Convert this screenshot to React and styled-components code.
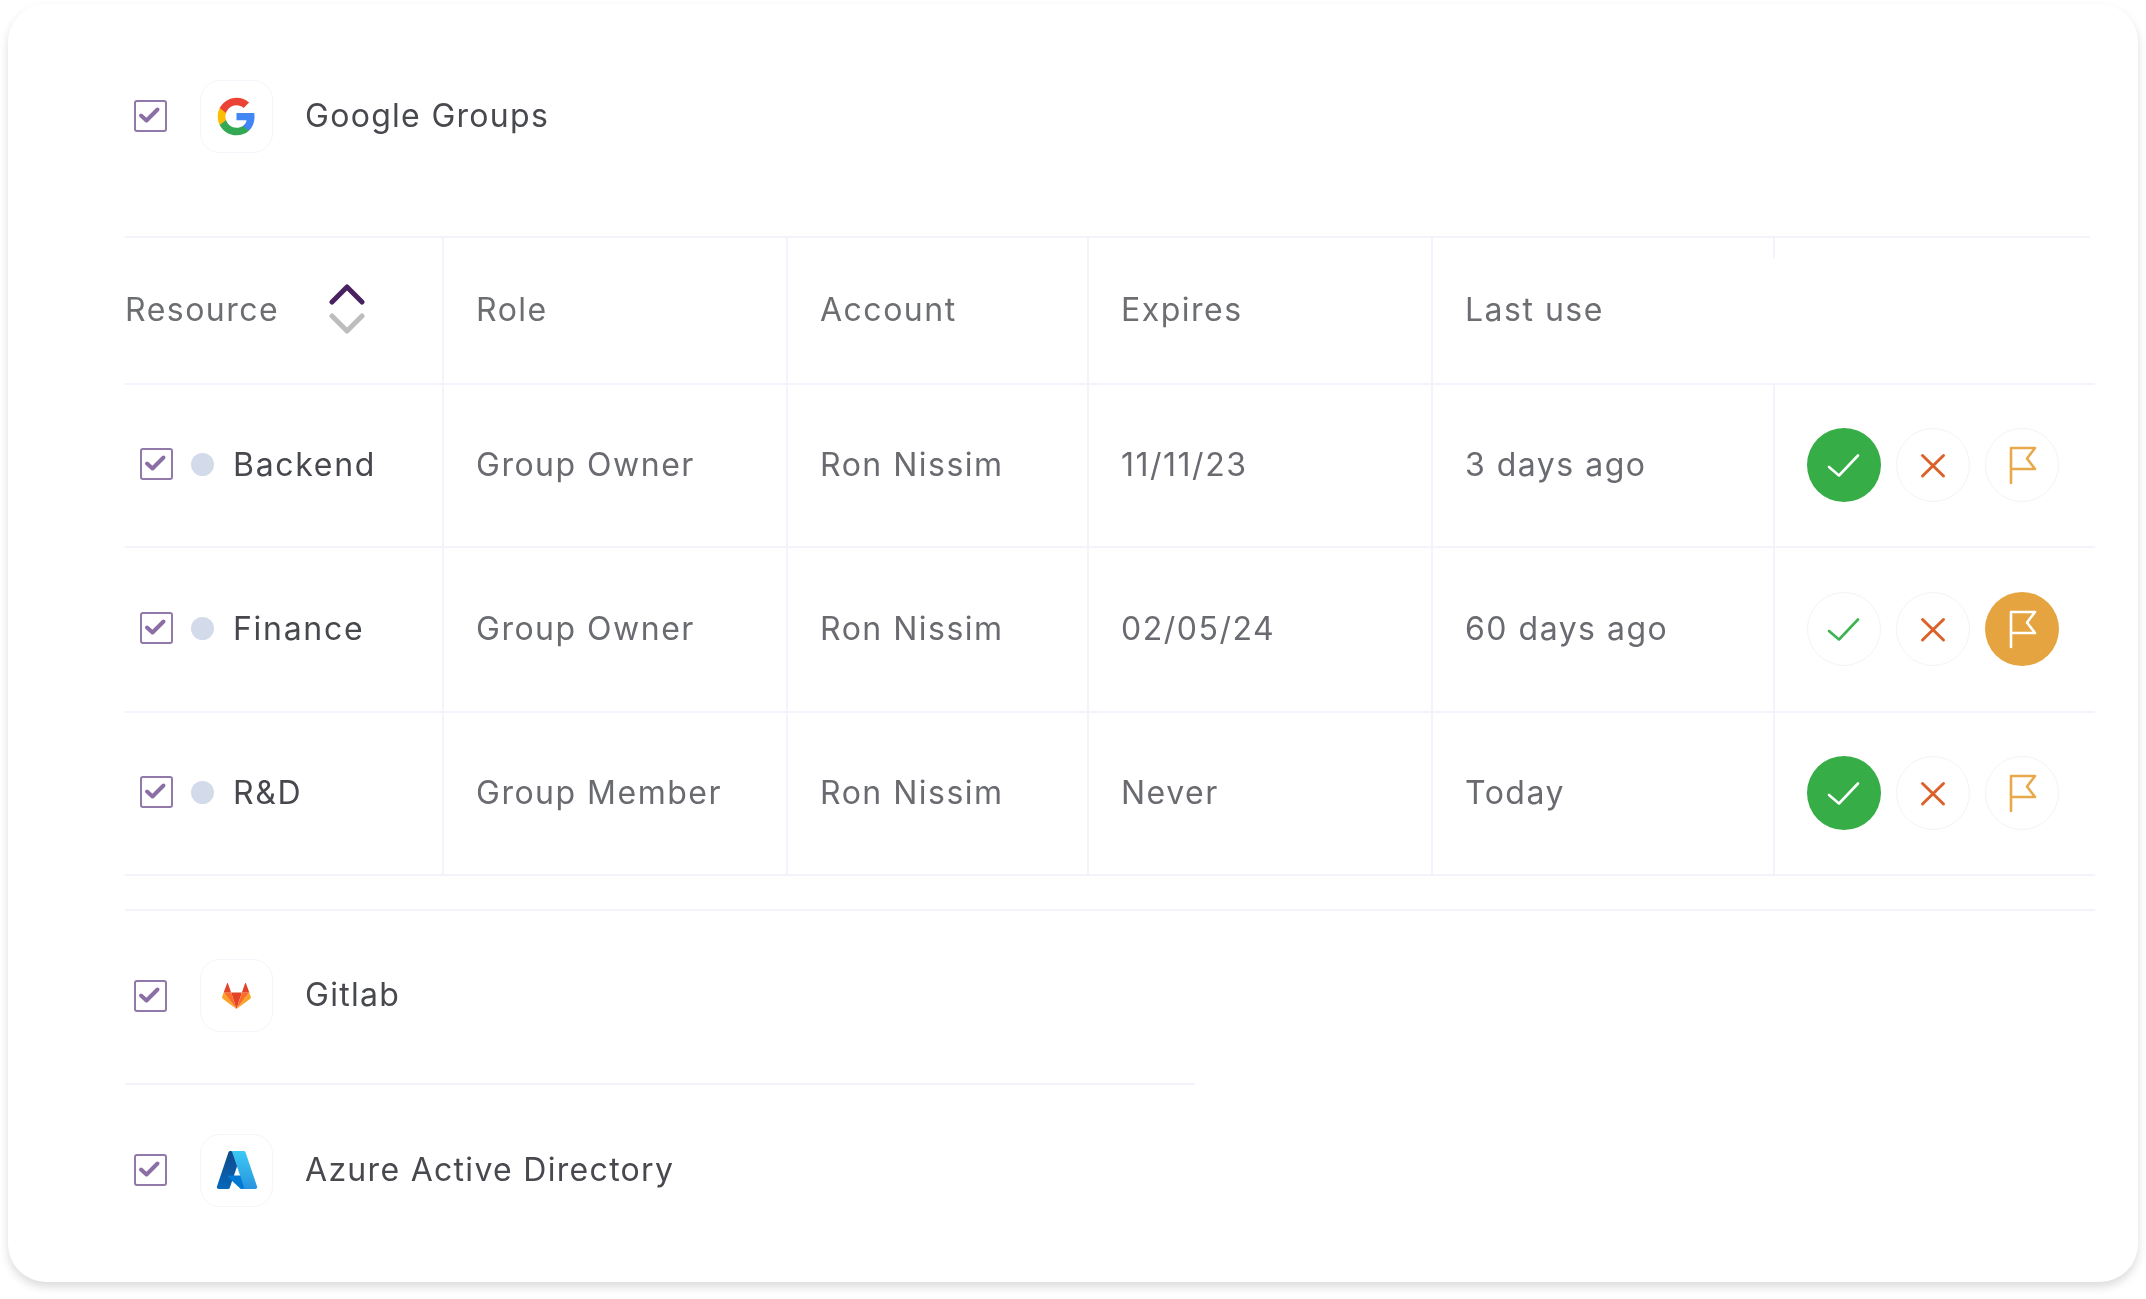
import React from 'react';
import styled, { createGlobalStyle } from 'styled-components';

const GlobalStyle = createGlobalStyle`
  html, body {
    margin: 0;
    padding: 0;
    background: #fff;
  }
  body {
    box-sizing: border-box;
    min-height: 1299px;
    padding-top: 4px;
    font-family: Inter, "Noto Sans", sans-serif;
  }
`;

const Card = styled.div`
  box-sizing: border-box;
  width: 2130px;
  height: 1278px;
  margin-left: 8px;
  padding: 0 43px 0 117px;
  background: #fff;
  border-radius: 38px;
  box-shadow: 0 5px 10px rgba(0, 0, 0, 0.14);
  filter: blur(0.4px);
`;

const GroupRow = styled.div`
  box-sizing: border-box;
  display: flex;
  align-items: center;
  height: ${(p) => p.$height}px;
  padding: 0 0 ${(p) => p.$bottom || 0}px 9px;
  width: ${(p) => p.$width || '100%'};
  border-bottom: ${(p) => (p.$line ? '2px solid #f3f4f9' : 'none')};
`;

const Check = styled.span`
  box-sizing: border-box;
  flex: none;
  width: 33px;
  height: 32px;
  border: 2px solid #9179a9;
  border-radius: 3px;
  svg {
    display: block;
    width: 29px;
    height: 28px;
  }
`;

const LogoBox = styled.div`
  box-sizing: border-box;
  flex: none;
  display: flex;
  align-items: center;
  justify-content: center;
  width: 73px;
  height: 73px;
  margin-left: 33px;
  border: 1.5px solid #f4f5fb;
  border-radius: 20px;
`;

const GroupName = styled.span`
  margin-left: 32px;
  padding-bottom: 2px;
  font-size: 32px;
  letter-spacing: 1.3px;
  color: #47494e;
`;

const Spacer = styled.div`
  box-sizing: border-box;
  height: 35px;
  border-bottom: 2px solid #f3f4f9;
`;

const Table = styled.div`
  border-top: 2px solid #f3f4fb;
  margin-right: 5px;
`;

const Row = styled.div`
  display: grid;
  grid-template-columns: 319px 344px 301px 344px 342px 1fr;
  height: ${(p) => p.$height}px;
  box-sizing: border-box;
  border-bottom: 2px solid #f3f4fb;
  margin-right: -5px;
`;

const Cell = styled.div`
  position: relative;
  box-sizing: border-box;
  display: flex;
  align-items: center;
  padding: 0 0 3px 32px;
  border-right: ${(p) => (p.$noLine ? 'none' : '2px solid #f3f4fb')};
  font-size: 32px;
  letter-spacing: 1.5px;
  white-space: nowrap;
  color: ${(p) => (p.$head ? '#6c6e72' : '#696b70')};
`;

const ResourceHead = styled(Cell)`
  padding-left: 0;
`;

const LastUseHead = styled(Cell)`
  border-right: none;
  &::after {
    content: '';
    position: absolute;
    top: 0;
    right: 0;
    width: 2px;
    height: 20px;
    background: #f3f4fb;
  }
`;

const SortIcon = styled.svg`
  flex: none;
  width: 36px;
  height: 50px;
  margin-left: 50px;
`;

const ResourceCell = styled(Cell)`
  padding-left: 15px;
  letter-spacing: 1.7px;
`;

const Dot = styled.span`
  flex: none;
  width: 23px;
  height: 23px;
  margin-left: 18px;
  border-radius: 50%;
  background: #d3dbea;
`;

const ResourceName = styled.span`
  margin-left: 19px;
  color: #46484d;
`;

const Actions = styled(Cell)`
  gap: 15px;
  padding: 0 0 1px 32px;
  border-right: none;
`;

const ActionButton = styled.span`
  box-sizing: border-box;
  flex: none;
  display: flex;
  align-items: center;
  justify-content: center;
  width: 74px;
  height: 74px;
  border-radius: 50%;
  border: ${(p) => (p.$fill ? 'none' : '1.5px solid #f3f4f8')};
  background: ${(p) => p.$fill || '#fff'};
  svg {
    width: 74px;
    height: 74px;
    flex: none;
  }
`;

const TickMark = () => (
  <svg viewBox="0 0 29 28" fill="none" stroke="#8c6ea6" strokeWidth="4" strokeLinecap="round" strokeLinejoin="round">
    <path d="M5 13.5l5.5 5L21.5 7.5" />
  </svg>
);

const GoogleLogo = () => (
  <svg width="41" height="41" viewBox="0 0 24 24">
    <path fill="#4285F4" d="M22.56 12.25c0-.78-.07-1.53-.2-2.25H12v4.26h5.92c-.26 1.37-1.04 2.53-2.21 3.31v2.77h3.57c2.08-1.92 3.28-4.74 3.28-8.09z" />
    <path fill="#34A853" d="M12 23c2.97 0 5.46-.98 7.28-2.66l-3.57-2.77c-.98.66-2.23 1.06-3.71 1.06-2.86 0-5.29-1.93-6.16-4.53H2.18v2.84C3.99 20.53 7.7 23 12 23z" />
    <path fill="#FBBC05" d="M5.84 14.09c-.22-.66-.35-1.36-.35-2.09s.13-1.43.35-2.09V7.07H2.18C1.43 8.55 1 10.22 1 12s.43 3.45 1.18 4.93l2.85-2.22.81-.62z" />
    <path fill="#EA4335" d="M12 5.38c1.62 0 3.06.56 4.21 1.64l3.15-3.15C17.45 2.09 14.97 1 12 1 7.7 1 3.99 3.47 2.18 7.07l3.66 2.84c.87-2.6 3.3-4.53 6.16-4.53z" />
  </svg>
);

const GitlabLogo = () => (
  <svg width="29" height="26" viewBox="0 0 28 25">
    <polygon fill="#e24329" points="14,25 8.8,9 19.2,9" />
    <polygon fill="#fc6d26" points="14,25 8.8,9 1.6,9" />
    <polygon fill="#fc6d26" points="14,25 19.2,9 26.4,9" />
    <polygon fill="#fca326" points="1.6,9 0,14 1,15.5 14,25" />
    <polygon fill="#fca326" points="26.4,9 28,14 27,15.5 14,25" />
    <polygon fill="#e24329" points="1.6,9 8.8,9 5.6,0 5,0" />
    <polygon fill="#e24329" points="26.4,9 19.2,9 22.4,0 23,0" />
  </svg>
);

const AzureLogo = () => (
  <svg width="44" height="44" viewBox="0 0 96 96">
    <defs>
      <linearGradient id="az-b" x1="0.3" y1="0" x2="0.1" y2="1">
        <stop offset="0" stopColor="#114a8b" />
        <stop offset="1" stopColor="#0669bc" />
      </linearGradient>
      <linearGradient id="az-c" x1="0.6" y1="0" x2="0.5" y2="1">
        <stop offset="0" stopColor="#3ccbf4" />
        <stop offset="1" stopColor="#2892df" />
      </linearGradient>
    </defs>
    <path fill="url(#az-b)" d="M33.338 6.544h26.038l-27.03 80.087a4.152 4.152 0 0 1-3.933 2.824H8.149a4.145 4.145 0 0 1-3.928-5.47L29.404 9.368a4.152 4.152 0 0 1 3.934-2.825z" />
    <path fill="#0078d4" d="M71.175 60.261h-41.29a1.911 1.911 0 0 0-1.305 3.309l26.532 24.764a4.171 4.171 0 0 0 2.846 1.121h23.38z" />
    <path fill="url(#az-c)" d="M66.595 9.364a4.145 4.145 0 0 0-3.928-2.82H33.648a4.146 4.146 0 0 1 3.928 2.82l25.184 74.62a4.146 4.146 0 0 1-3.928 5.472h29.02a4.146 4.146 0 0 0 3.927-5.472z" />
  </svg>
);

const CheckIcon = ({ color }) => (
  <svg viewBox="0 0 74 74" fill="none" stroke={color} strokeWidth="2.6" strokeLinecap="round" strokeLinejoin="round">
    <path d="M22 39l10 8.5L51 27.5" />
  </svg>
);

const CrossIcon = () => (
  <svg viewBox="0 0 74 74" fill="none" stroke="#dc6128" strokeWidth="3" strokeLinecap="round">
    <path d="M26.5 27.5L47.5 48M47.5 27.5L26.5 48" />
  </svg>
);

const FlagIcon = ({ color }) => (
  <svg viewBox="0 0 74 74" fill="none" stroke={color} strokeWidth="2.6" strokeLinecap="round" strokeLinejoin="round">
    <path d="M26 55V20h24l-8 10.5 8 10.5H26" />
  </svg>
);

const groups = [
  { name: 'Backend', role: 'Group Owner', expires: '11/11/23', last: '3 days ago', state: 'ok', height: 163 },
  { name: 'Finance', role: 'Group Owner', expires: '02/05/24', last: '60 days ago', state: 'flag', height: 165 },
  { name: 'R&D', role: 'Group Member', expires: 'Never', last: 'Today', state: 'ok', height: 163 },
];

function App() {
  return (
    <>
      <GlobalStyle />
      <Card>
        <GroupRow $height={232} $bottom={8}>
          <Check><TickMark /></Check>
          <LogoBox><GoogleLogo /></LogoBox>
          <GroupName>Google Groups</GroupName>
        </GroupRow>
        <Table>
          <Row $height={147} $head>
            <ResourceHead $head>
              Resource
              <SortIcon viewBox="0 0 36 50" fill="none" strokeWidth="5" strokeLinecap="round" strokeLinejoin="round">
                <path d="M3 18L18 3l15 15" stroke="#48215f" />
                <path d="M3 32l15 15 15-15" stroke="#bdbdbf" />
              </SortIcon>
            </ResourceHead>
            <Cell $head>Role</Cell>
            <Cell $head>Account</Cell>
            <Cell $head>Expires</Cell>
            <LastUseHead $head>Last use</LastUseHead>
            <Cell $noLine />
          </Row>
          {groups.map((g) => (
            <Row key={g.name} $height={g.height}>
              <ResourceCell>
                <Check><TickMark /></Check>
                <Dot />
                <ResourceName>{g.name}</ResourceName>
              </ResourceCell>
              <Cell>{g.role}</Cell>
              <Cell>Ron Nissim</Cell>
              <Cell>{g.expires}</Cell>
              <Cell>{g.last}</Cell>
              <Actions>
                <ActionButton $fill={g.state === 'ok' ? '#36ad47' : undefined}>
                  <CheckIcon color={g.state === 'ok' ? '#fff' : '#3fb353'} />
                </ActionButton>
                <ActionButton><CrossIcon /></ActionButton>
                <ActionButton $fill={g.state === 'flag' ? '#e5a43f' : undefined}>
                  <FlagIcon color={g.state === 'flag' ? '#fff' : '#e8a94a'} />
                </ActionButton>
              </Actions>
            </Row>
          ))}
        </Table>
        <Spacer />
        <GroupRow $height={174} $width="1070px" $line $bottom={3}>
          <Check><TickMark /></Check>
          <LogoBox><GitlabLogo /></LogoBox>
          <GroupName>Gitlab</GroupName>
        </GroupRow>
        <GroupRow $height={172} $bottom={2}>
          <Check><TickMark /></Check>
          <LogoBox><AzureLogo /></LogoBox>
          <GroupName>Azure Active Directory</GroupName>
        </GroupRow>
      </Card>
    </>
  );
}

export default App;
